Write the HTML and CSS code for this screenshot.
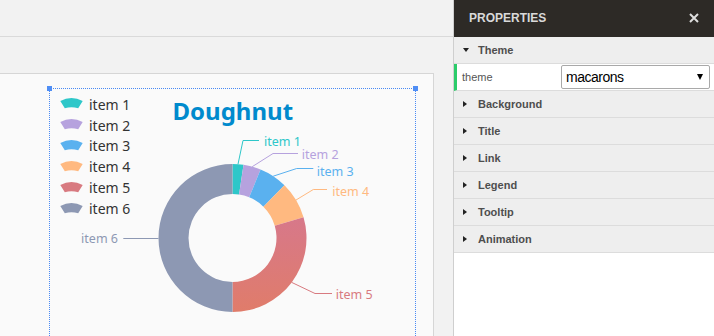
FILE: index.html
```html
<!DOCTYPE html>
<html>
<head>
<meta charset="utf-8">
<title>Doughnut editor</title>
<link rel="stylesheet" href="styles.css">
</head>
<body>
<div class="app">
  <div class="main">
    <div class="toolbar"></div>
    <div class="subbar"></div>
    <div class="workspace">
      <div class="paper">
        <div class="chart">
          <span class="handle handle-tl"></span>
          <span class="handle handle-tr"></span>
          <svg class="chart-svg" width="365" height="262" viewBox="50 89 365 262">
            <defs>
              <path id="leg" d="M0.3 3A23 23 0 0 1 22.7 3L18.2 10.2A22 22 0 0 0 4.8 10.2Z"/>
              <linearGradient id="g5" x1="0" y1="0" x2="0" y2="1">
                <stop offset="0" stop-color="#d7788a"/>
                <stop offset="1" stop-color="#e07c6a"/>
              </linearGradient>
            </defs>
            <g class="legend">
              <use href="#leg" x="60" y="98" fill="#2ec7c9"/>
              <use href="#leg" x="60" y="119" fill="#b6a2de"/>
              <use href="#leg" x="60" y="140" fill="#5ab1ef"/>
              <use href="#leg" x="60" y="161" fill="#ffb980"/>
              <use href="#leg" x="60" y="182" fill="#d87a80"/>
              <use href="#leg" x="60" y="203" fill="#8d98b3"/>
              <text class="legend-text" x="89" y="110">item 1</text>
              <text class="legend-text" x="89" y="130.7">item 2</text>
              <text class="legend-text" x="89" y="151.4">item 3</text>
              <text class="legend-text" x="89" y="172.1">item 4</text>
              <text class="legend-text" x="89" y="192.8">item 5</text>
              <text class="legend-text" x="89" y="213.5">item 6</text>
            </g>
            <text class="title-text" x="172.5" y="119.5">Doughnut</text>
            <g class="donut">
              <path fill="#2ec7c9" d="M232.5 164A74 74 0 0 1 243.53 164.83L239.06 194.49A44 44 0 0 0 232.5 194Z"/>
              <path fill="#b6a2de" d="M243.53 164.83A74 74 0 0 1 260.56 169.53L249.19 197.29A44 44 0 0 0 239.06 194.49Z"/>
              <path fill="#5ab1ef" d="M260.56 169.53A74 74 0 0 1 284.43 185.28L263.38 206.65A44 44 0 0 0 249.19 197.29Z"/>
              <path fill="#ffb980" d="M284.43 185.28A74 74 0 0 1 303.53 217.25L274.73 225.66A44 44 0 0 0 263.38 206.65Z"/>
              <path fill="url(#g5)" d="M303.53 217.25A74 74 0 0 1 232.5 312L232.5 282A44 44 0 0 0 274.73 225.66Z"/>
              <path fill="#8d98b3" d="M232.5 312A74 74 0 0 1 158.5 238A74 74 0 0 1 232.5 164L232.5 194A44 44 0 0 0 188.5 238A44 44 0 0 0 232.5 282Z"/>
            </g>
            <g class="label-lines">
              <polyline stroke="#2ec7c9" points="238,164.2 243,140.5 259,140.5"/>
              <polyline stroke="#b6a2de" points="252.2,166.7 273,153.5 298,153.5"/>
              <polyline stroke="#5ab1ef" points="273.2,176.2 296.7,168.5 313.3,168.5"/>
              <polyline stroke="#ffb980" points="296,200 313.3,189.5 327,189.5"/>
              <polyline stroke="#d87a80" points="291.7,282.4 315,293.5 332,293.5"/>
              <polyline stroke="#8d98b3" points="158.5,238.5 123.3,238.5"/>
            </g>
            <text class="label" fill="#2ec7c9" x="264" y="146">item 1</text>
            <text class="label" fill="#b6a2de" x="301.7" y="159.3">item 2</text>
            <text class="label" fill="#5ab1ef" x="316.7" y="175.5">item 3</text>
            <text class="label" fill="#ffb980" x="332.3" y="195.5">item 4</text>
            <text class="label" fill="#d87a80" x="335.7" y="299">item 5</text>
            <text class="label" fill="#8d98b3" x="118" y="243" text-anchor="end">item 6</text>
          </svg>
        </div>
      </div>
    </div>
  </div>
  <aside class="panel">
    <div class="panel-header">
      <span class="panel-title">PROPERTIES</span>
      <svg class="close" width="10" height="10" viewBox="0 0 10 10"><path d="M1 1L9 9M9 1L1 9"/></svg>
    </div>
    <div class="section"><span class="caret caret-down"></span>Theme</div>
    <div class="field">
      <span class="field-label">theme</span>
      <div class="select"><span>macarons</span><span class="select-arrow"></span></div>
    </div>
    <div class="section"><span class="caret"></span>Background</div>
    <div class="section"><span class="caret"></span>Title</div>
    <div class="section"><span class="caret"></span>Link</div>
    <div class="section"><span class="caret"></span>Legend</div>
    <div class="section"><span class="caret"></span>Tooltip</div>
    <div class="section"><span class="caret"></span>Animation</div>
  </aside>
</div>
</body>
</html>
```
FILE: styles.css
```css
html, body {
  margin: 0;
  padding: 0;
}
body {
  width: 714px;
  height: 336px;
  overflow: hidden;
  background: #f2f2f2;
  font-family: "Liberation Sans", Arial, sans-serif;
}
.app {
  display: flex;
  height: 336px;
}
.main {
  width: 453px;
  flex: none;
  display: flex;
  flex-direction: column;
  background: #f2f2f2;
}
.toolbar {
  flex: none;
  height: 36px;
  border-bottom: 1px solid #dadada;
}
.subbar {
  flex: none;
  height: 36px;
}
.workspace {
  flex: 1;
  min-height: 0;
  display: flex;
}
.paper {
  box-sizing: border-box;
  width: 434px;
  height: 100%;
  padding: 14px 0 0 49px;
  border-top: 1px solid #d6d6d6;
  border-right: 1px solid #d6d6d6;
  background: #fafafa;
  overflow: hidden;
}
.chart {
  position: relative;
  width: 365px;
  height: 262px;
  border: 1px dotted #4a8af4;
}
.handle {
  position: absolute;
  top: -3px;
  width: 5px;
  height: 5px;
  background: #4f8ef5;
}
.handle-tl { left: -3px; }
.handle-tr { right: -3px; }
.chart-svg {
  display: block;
}
.legend-text {
  font-family: "Noto Sans", "Open Sans", sans-serif;
  font-size: 14px;
  fill: #333;
}
.title-text {
  font-family: "Noto Sans", "Open Sans", sans-serif;
  font-size: 24px;
  font-weight: bold;
  fill: #008acd;
}
.label {
  font-family: "Noto Sans", "Open Sans", sans-serif;
  font-size: 12.5px;
}
.label-lines polyline {
  fill: none;
  stroke-width: 1;
}

.panel {
  width: 260px;
  flex: none;
  border-left: 1px solid #cfcfcf;
  background: #fff;
  display: flex;
  flex-direction: column;
}
.panel-header {
  box-sizing: border-box;
  height: 37px;
  flex: none;
  background: #2d2a26;
  display: flex;
  align-items: center;
  justify-content: space-between;
  padding: 0 15px 1px 15px;
}
.panel-title {
  color: #d9d9d9;
  font-size: 12px;
  font-weight: bold;
}
.close {
  display: block;
}
.close path {
  stroke: #dedede;
  stroke-width: 2;
  fill: none;
}
.section {
  flex: none;
  height: 26px;
  border-bottom: 1px solid #dcdcdc;
  background: #eeeeee;
  display: flex;
  align-items: center;
  padding-left: 9px;
  font-size: 11px;
  font-weight: bold;
  color: #4e4e4e;
}
.caret {
  width: 0;
  height: 0;
  border-left: 4px solid #222;
  border-top: 3px solid transparent;
  border-bottom: 3px solid transparent;
  margin-right: 11px;
}
.caret-down {
  border-left: 3px solid transparent;
  border-right: 3px solid transparent;
  border-top: 4px solid #222;
  border-bottom: 0;
  margin-right: 9px;
}
.field {
  flex: none;
  height: 26px;
  border-bottom: 1px solid #dcdcdc;
  border-left: 3px solid #2bcc6a;
  background: #fff;
  display: flex;
  align-items: center;
  padding-left: 5px;
}
.field-label {
  width: 99px;
  font-size: 11px;
  color: #555;
}
.select {
  box-sizing: border-box;
  width: 149px;
  height: 24px;
  border: 1px solid #a9a9a9;
  border-radius: 2px;
  display: flex;
  align-items: center;
  justify-content: space-between;
  padding: 0 6px 0 4px;
  font-size: 14px;
  letter-spacing: -0.5px;
  color: #000;
  background: #fff;
}
.select-arrow {
  width: 0;
  height: 0;
  border-left: 3px solid transparent;
  border-right: 3px solid transparent;
  border-top: 6px solid #000;
}
```
